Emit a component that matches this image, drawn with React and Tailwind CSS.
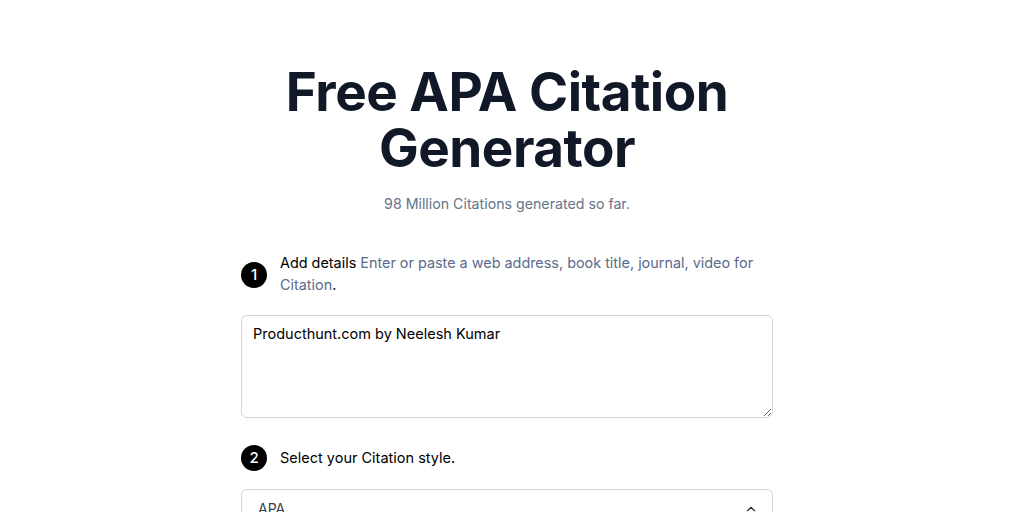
import { ChevronUp } from 'lucide-react';

const StepBadge = ({ n }) => (
  <div className="w-[26px] h-[26px] shrink-0 rounded-full bg-black text-white flex items-center justify-center text-[15px] font-medium">
    {n}
  </div>
);

const App = () => {
  return (
    <div className="min-h-[512px] bg-white pr-[10px] font-['Inter',sans-serif]">
      <div className="w-[532px] mx-auto pt-[64px]">
        <h1 className="text-center text-[53px] leading-[56px] font-bold tracking-[-0.5px] text-[#111827]">
          Free APA Citation
          <br />
          Generator
        </h1>
        <p className="text-center text-[14.2px] text-[#64748b] mt-[17px]">
          98 Million Citations generated so far.
        </p>

        <div className="flex items-center gap-[13px] mt-[39px]">
          <StepBadge n="1" />
          <p className="text-[14.4px] leading-[22px] text-black -mt-[1px]">
            Add details{' '}
            <span className="text-[#5a6b8c]">
              Enter or paste a web address, book title, journal, video for Citation
            </span>
            .
          </p>
        </div>

        <textarea
          className="block mt-[19px] w-full h-[103px] rounded-[6px] border border-[#d1d5db] px-[11px] py-[7px] text-[14.5px] text-black outline-none resize-y"
          defaultValue="Producthunt.com by Neelesh Kumar"
        />

        <div className="flex items-center gap-[13px] mt-[27px]">
          <StepBadge n="2" />
          <p className="text-[14.5px] leading-[22px] text-black">Select your Citation style.</p>
        </div>

        <div className="mt-[18px] h-[44px] rounded-[6px] border border-[#d1d5db] flex items-start justify-between px-[16px] pt-[9px]">
          <span className="text-[14px] leading-[20px] text-[#374151]">APA</span>
          <ChevronUp size={14} strokeWidth={2} className="text-[#1f2937] mt-[3px] -mr-[2px]" />
        </div>
      </div>
    </div>
  );
};

export default App;
